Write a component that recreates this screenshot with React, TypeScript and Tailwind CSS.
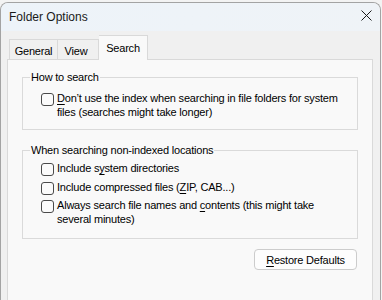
import React from "react";

function Check() {
  return (
    <span className="mt-[2px] block h-[13px] w-[13px] shrink-0 rounded-[3px] border border-[#4a4a4a] bg-[#fbfbfb]" />
  );
}

function U({ children }: { children: React.ReactNode }) {
  return <span className="underline underline-offset-[2px] decoration-[1px]">{children}</span>;
}

export default function App() {
  return (
    <div
      className="h-[300px] w-[382px] overflow-hidden bg-[#f3f3f3] pt-[2px] text-black"
      style={{ fontFamily: '"Liberation Sans", Arial, sans-serif' }}
    >
      <div className="flex h-[298px] w-[381px] flex-col overflow-hidden rounded-t-[8px] border border-b-0 border-[#a3a3a3] bg-[#f0f0f0]">
        {/* title bar */}
        <div className="flex h-[28px] shrink-0 items-start justify-between bg-gradient-to-r from-[#edf3f9] to-[#eff3f7] pl-[8px] pr-[8px]">
          <span className="mt-[6px] text-[12px] leading-[16px] text-[#1a1a1a]">Folder Options</span>
          <svg className="mt-[7px]" width="11" height="11" viewBox="0 0 11 11">
            <path d="M0.5 0.5 L10.5 10.5 M10.5 0.5 L0.5 10.5" stroke="#1a1a1a" strokeWidth="1" fill="none" />
          </svg>
        </div>
        {/* body */}
        <div className="flex flex-1 flex-col pl-[6px] pr-[7px] pt-[4px] text-[11px] leading-[14px] tracking-[-0.2px]">
          {/* tabs */}
          <div className="flex h-[24px] items-end pl-[2px]">
            <div className="flex h-[20px] w-[48px] justify-center border-l border-t border-[#d9d9d9] bg-[#f0f0f0] pt-[4px]">
              General
            </div>
            <div className="flex h-[20px] w-[42px] justify-center border-l border-r border-t border-[#d9d9d9] bg-[#f0f0f0] pr-[4px] pt-[4px]">
              View
            </div>
            <div className="relative z-10 -mb-px flex h-[25px] w-[49px] justify-center border-r border-t border-[#d9d9d9] bg-[#f9f9f9] pt-[5px]">
              Search
            </div>
          </div>
          {/* tab page */}
          <div className="flex flex-1 flex-col border border-b-0 border-[#d9d9d9] bg-[#f9f9f9] px-[14px] pt-[10px]">
            <fieldset className="border border-[#dadada] pb-[10px] pl-[18px] pr-[8px] pt-[7px]">
              <legend className="ml-[-11px] px-[1px] leading-[14px]">How to search</legend>
              <div className="flex gap-[3px]">
                <Check />
                <span className="whitespace-nowrap">
                  <U>D</U>on’t use the index when searching in file folders for system
                  <br />
                  files (searches might take longer)
                </span>
              </div>
            </fieldset>
            <fieldset className="mt-[13px] border border-[#dadada] pb-[12px] pl-[18px] pr-[8px] pt-[4px]">
              <legend className="ml-[-11px] px-[1px] leading-[14px]">When searching non-indexed locations</legend>
              <div className="flex gap-[3px]">
                <Check />
                <span className="whitespace-nowrap">
                  Include s<U>y</U>stem directories
                </span>
              </div>
              <div className="mt-[4px] flex gap-[3px]">
                <Check />
                <span className="whitespace-nowrap">
                  Include compressed files (<U>Z</U>IP, CAB...)
                </span>
              </div>
              <div className="mt-[3px] flex gap-[3px]">
                <Check />
                <span className="whitespace-nowrap">
                  Always search file names and <U>c</U>ontents (this might take
                  <br />
                  several minutes)
                </span>
              </div>
            </fieldset>
            <div className="mt-[10px] flex justify-end pr-[1px]">
              <button className="h-[21px] w-[103px] rounded-[4px] border border-[#cccccc] bg-[#fdfdfd] text-[11px] leading-[14px] text-black">
                <U>R</U>estore Defaults
              </button>
            </div>
          </div>
        </div>
      </div>
    </div>
  );
}
